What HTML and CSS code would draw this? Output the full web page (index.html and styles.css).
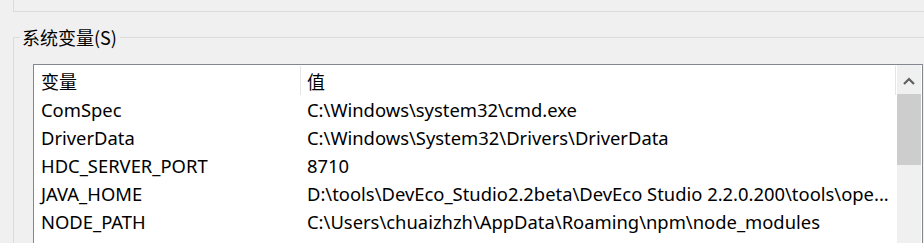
FILE: index.html
```html
<!DOCTYPE html>
<html>
<head>
  <meta charset="utf-8">
  <title>系统变量</title>
  <link rel="stylesheet" href="styles.css">
</head>
<body>
<div class="upper-panel"></div>

<fieldset class="group">
  <legend>系统变量(S)</legend>

  <div class="listview">
    <div class="table">
      <div class="header">
        <div class="col-name">变量</div>
        <div class="col-sep"></div>
        <div class="col-value">值</div>
        <div class="col-sep"></div>
      </div>

      <div class="row">
        <div class="col-name">ComSpec</div>
        <div class="col-value">C:\Windows\system32\cmd.exe</div>
      </div>
      <div class="row">
        <div class="col-name">DriverData</div>
        <div class="col-value">C:\Windows\System32\Drivers\DriverData</div>
      </div>
      <div class="row">
        <div class="col-name">HDC_SERVER_PORT</div>
        <div class="col-value">8710</div>
      </div>
      <div class="row">
        <div class="col-name">JAVA_HOME</div>
        <div class="col-value">D:\tools\DevEco_Studio2.2beta\DevEco Studio 2.2.0.200\tools\ope...</div>
      </div>
      <div class="row">
        <div class="col-name">NODE_PATH</div>
        <div class="col-value">C:\Users\chuaizhzh\AppData\Roaming\npm\node_modules</div>
      </div>
    </div>

    <div class="scrollbar">
      <div class="arrow">
        <svg width="12" height="8" viewBox="0 0 12 8">
          <polyline points="1,7 6,2 11,7" fill="none" stroke="#606060" stroke-width="2.2"/>
        </svg>
      </div>
      <div class="thumb"></div>
    </div>
  </div>
</fieldset>
</body>
</html>
```

FILE: styles.css
```css
html, body {
  margin: 0;
  height: 100%;
  overflow: hidden;
}

body {
  background: #f0f0f0;
  font-family: "Noto Sans", "Noto Sans CJK SC", sans-serif;
  font-size: 18px;
  color: #000;
}

.upper-panel {
  height: 11px;
  margin-left: 13px;
  border-left: 1px solid #dcdcdc;
  border-bottom: 1px solid #dcdcdc;
}

.group {
  margin: 13px 0 0 13px;
  padding: 15px 0 0 6px;
  border: 1px solid #dcdcdc;
  border-right: none;
  border-bottom: none;
  min-width: 0;
}

.group legend {
  padding: 0 3px 0 2px;
  line-height: 24px;
  font-family: "Noto Sans CJK SC", sans-serif;
}

.listview {
  display: flex;
  height: 179px;
  margin: 0 1px 0 13px;
  background: #fff;
  border: 1px solid #828790;
  border-bottom: none;
}

.table {
  flex: 1;
  min-width: 0;
}

.header {
  display: flex;
  height: 31px;
  align-items: center;
}

.header .col-name,
.header .col-value {
  font-family: "Noto Sans CJK SC", sans-serif;
}

.col-sep {
  width: 1px;
  align-self: stretch;
  margin: 1px 0;
  background: #e5e5e5;
}

.row {
  display: flex;
  height: 27.8px;
  align-items: center;
  font-size: 18.4px;
}

.col-name {
  width: 259px;
  padding-left: 7px;
  white-space: nowrap;
}

.col-value {
  width: 588px;
  padding-left: 6px;
  white-space: nowrap;
  overflow: hidden;
}

.row .col-value {
  padding-left: 7px;
}

.scrollbar {
  width: 24px;
  margin-right: 1px;
  background: #f0f0f0;
}

.arrow {
  height: 27px;
  display: flex;
  align-items: center;
  justify-content: center;
  padding-top: 2px;
}

.thumb {
  height: 71px;
  background: #cdcdcd;
}
```
